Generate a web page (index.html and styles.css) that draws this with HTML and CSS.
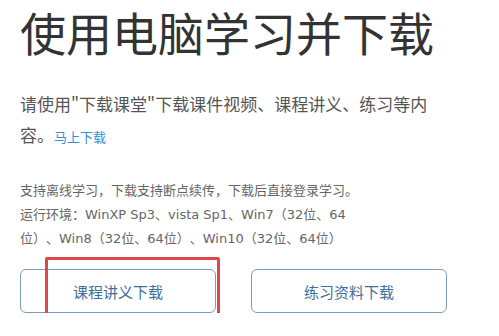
FILE: index.html
```html
<!DOCTYPE html>
<html lang="zh-CN">
<head>
<meta charset="utf-8">
<link rel="stylesheet" href="styles.css">
</head>
<body>
<div class="page">
  <h1 class="title">使用电脑学习并下载</h1>
  <p class="intro">请使用"下载课堂"下载课件视频、课程讲义、练习等内<br>容。<a class="link" href="#">马上下载</a></p>
  <p class="info">支持离线学习，下载支持断点续传，下载后直接登录学习。<br>运行环境：WinXP Sp3、vista Sp1、Win7（32位、64<br>位）、Win8（32位、64位）、Win10（32位、64位）</p>
  <div class="buttons">
    <a class="btn" href="#">课程讲义下载<span class="mark"></span></a>
    <a class="btn" href="#">练习资料下载</a>
  </div>
</div>
</body>
</html>
```
FILE: styles.css
```css
html, body {
  margin: 0;
  padding: 0;
  background: #fff;
}
.page {
  padding: 0 0 0 20px;
  font-family: "Noto Sans CJK SC", "Noto Sans", sans-serif;
  width: 470px;
  text-spacing-trim: space-all;
}
.title {
  margin: 0;
  font-size: 46px;
  line-height: 62px;
  font-weight: 400;
  color: #333;
  letter-spacing: 0;
  white-space: nowrap;
}
.intro {
  margin: 26px 0 0;
  font-size: 17px;
  line-height: 31px;
  color: #555;
  white-space: nowrap;
}
.link {
  font-size: 13px;
  color: #3b8dd1;
  text-decoration: none;
  margin-left: 0;
}
.info {
  margin: 27px 0 0;
  font-family: "DejaVu Sans", "Noto Sans CJK SC", sans-serif;
  font-size: 13px;
  line-height: 24px;
  color: #666;
  white-space: nowrap;
}
.buttons {
  display: flex;
  gap: 35px;
  margin-top: 18px;
}
.btn {
  position: relative;
  width: 196px;
  height: 44px;
  box-sizing: border-box;
  border: 1px solid #7d9cbb;
  border-radius: 6px;
  display: flex;
  align-items: center;
  justify-content: center;
  font-size: 15px;
  color: #3f6f9c;
  text-decoration: none;
}
.mark {
  position: absolute;
  left: 24px;
  top: -13px;
  width: 175px;
  height: 64px;
  box-sizing: border-box;
  border: 3.5px solid #e0474c;
  border-radius: 2px;
}
```
